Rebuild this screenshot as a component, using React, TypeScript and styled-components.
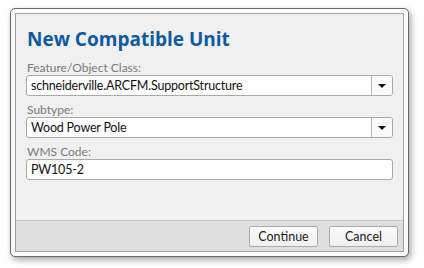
import styled, { createGlobalStyle } from 'styled-components';

const GlobalStyle = createGlobalStyle`
    html, body {
        margin: 0;
        padding: 0;
        background: #ffffff;
    }
    body {
        font-family: Lato, "Open Sans", sans-serif;
    }
`;

const Page = styled.div`
    width: 424px;
    height: 268px;
    padding: 8px 0 0 10px;
    box-sizing: border-box;
`;

const Window = styled.div`
    width: 399px;
    height: 249px;
    box-sizing: border-box;
    border: 1px solid #6a6a6a;
    border-radius: 5px;
    background: #fbfbfb;
    box-shadow: 2px 3px 6px rgba(0, 0, 0, 0.35);
    padding: 4px;
    display: flex;
`;

const Inner = styled.div`
    flex: 1;
    border: 1px solid #a0a0a0;
    background: #f0f0f0;
    display: flex;
    flex-direction: column;
`;

const Body = styled.div`
    flex: 1;
    padding: 12px 10px 0 10px;
    display: flex;
    flex-direction: column;
`;

const Title = styled.h1`
    margin: 0 0 2px 1px;
    font-family: "Open Sans", "Noto Sans", sans-serif;
    font-size: 19px;
    line-height: 26px;
    font-weight: 700;
    color: #0e5a9e;
`;

const Field = styled.div`
    display: flex;
    flex-direction: column;
`;

const Label = styled.label`
    font-size: 12px;
    line-height: 15px;
    color: #7a7a7a;
    margin-top: 6px;
    padding-left: 1px;
`;

const Box = styled.div`
    height: 21px;
    box-sizing: border-box;
    border: 1px solid #a9a9a9;
    border-radius: 3px;
    background: #ffffff;
    display: flex;
    align-items: stretch;
`;

const Value = styled.div`
    flex: 1;
    font-size: 12.5px;
    letter-spacing: -0.2px;
    line-height: 19px;
    color: #111;
    padding-left: 4px;
    white-space: nowrap;
    overflow: hidden;
`;

const DropButton = styled.div`
    width: 20px;
    border-left: 1px solid #b4b4b4;
    display: flex;
    align-items: center;
    justify-content: center;
    background: #fafafa;
    border-radius: 0 2px 2px 0;
`;

const Arrow = styled.div`
    width: 0;
    height: 0;
    border-left: 4px solid transparent;
    border-right: 4px solid transparent;
    border-top: 4px solid #111;
`;

const Footer = styled.div`
    height: 31px;
    box-sizing: border-box;
    border-top: 1px solid #c6c6c6;
    background: #dedede;
    display: flex;
    align-items: center;
    justify-content: flex-end;
    gap: 11px;
    padding-right: 5px;
`;

const Button = styled.button`
    width: 69px;
    height: 21px;
    box-sizing: border-box;
    border: 1px solid #acacac;
    border-radius: 2px;
    background: linear-gradient(#fbfbfb, #efefef);
    font-family: Lato, "Open Sans", sans-serif;
    font-size: 12.5px;
    color: #222;
    padding: 0;
    line-height: 19px;
`;

const Combo = ({ label, value }: { label: string; value: string }) => (
    <Field>
        <Label>{label}</Label>
        <Box>
            <Value>{value}</Value>
            <DropButton>
                <Arrow />
            </DropButton>
        </Box>
    </Field>
);

const App = () => (
    <>
        <GlobalStyle />
        <Page>
            <Window>
                <Inner>
                    <Body>
                        <Title>New Compatible Unit</Title>
                        <Combo label="Feature/Object Class:" value="schneiderville.ARCFM.SupportStructure" />
                        <Combo label="Subtype:" value="Wood Power Pole" />
                        <Field>
                            <Label>WMS Code:</Label>
                            <Box>
                                <Value>PW105-2</Value>
                            </Box>
                        </Field>
                    </Body>
                    <Footer>
                        <Button>Continue</Button>
                        <Button>Cancel</Button>
                    </Footer>
                </Inner>
            </Window>
        </Page>
    </>
);

export default App;
